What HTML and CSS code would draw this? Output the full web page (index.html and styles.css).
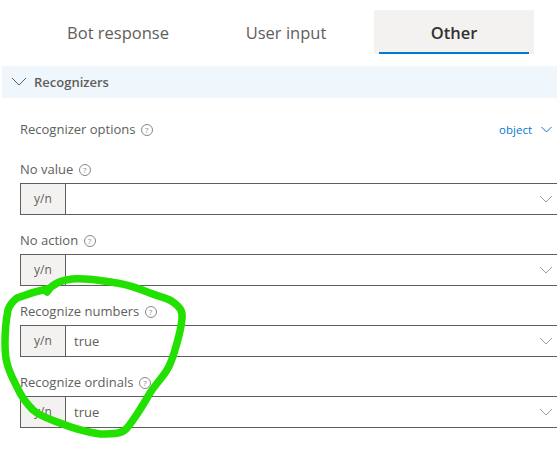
FILE: index.html
```html
<!DOCTYPE html>
<html lang="en">
<head>
    <title>Recognizers</title>
    <link rel="stylesheet" href="styles.css">
</head>
<body>
    <div class="tabs">
        <div class="tab">Bot response</div>
        <div class="tab">User input</div>
        <div class="tab active">Other</div>
    </div>
    <div class="section-head">
        <svg class="chevron-big" width="16" height="10" viewBox="0 0 16 10"><path d="M1 1l7 7 7-7" fill="none" stroke="#605e5c" stroke-width="1"/></svg>
        <span>Recognizers</span>
    </div>
    <div class="options-row">
        <span class="label">Recognizer options <span class="help">?</span></span>
        <span class="type-link">object
            <svg width="11" height="7" viewBox="0 0 11 7"><path d="M.5 1l5 5 5-5" fill="none" stroke="#0078d4" stroke-width="1"/></svg>
        </span>
    </div>
    <div class="field">
        <div class="label">No value <span class="help">?</span></div>
        <div class="input">
            <div class="prefix">y/n</div>
            <div class="value"></div>
            <svg class="arrow" width="14" height="8" viewBox="0 0 14 8"><path d="M1 1l6 6 6-6" fill="none" stroke="#a19f9d" stroke-width="1"/></svg>
        </div>
    </div>
    <div class="field">
        <div class="label">No action <span class="help">?</span></div>
        <div class="input">
            <div class="prefix">y/n</div>
            <div class="value"></div>
            <svg class="arrow" width="14" height="8" viewBox="0 0 14 8"><path d="M1 1l6 6 6-6" fill="none" stroke="#a19f9d" stroke-width="1"/></svg>
        </div>
    </div>
    <div class="field">
        <div class="label">Recognize numbers <span class="help">?</span></div>
        <div class="input">
            <div class="prefix">y/n</div>
            <div class="value">true</div>
            <svg class="arrow" width="14" height="8" viewBox="0 0 14 8"><path d="M1 1l6 6 6-6" fill="none" stroke="#a19f9d" stroke-width="1"/></svg>
        </div>
    </div>
    <div class="field">
        <div class="label">Recognize ordinals <span class="help">?</span></div>
        <div class="input">
            <div class="prefix">y/n</div>
            <div class="value">true</div>
            <svg class="arrow" width="14" height="8" viewBox="0 0 14 8"><path d="M1 1l6 6 6-6" fill="none" stroke="#a19f9d" stroke-width="1"/></svg>
        </div>
    </div>
    <!-- hand drawn circle on top of the form -->
    <svg class="scribble" width="557" height="452" viewBox="0 0 557 452">
        <path d="M47 292 C52 284 62 280 72 279 C88 278 104 281 117 283 C130 285 140 289 150 293 C160 297 168 298 173 302 C180 307 183 311 182 319 C181 328 179 336 177 343 C174 353 172 362 167 370 C162 378 155 385 150 393 C144 403 139 412 133 420 C128 427 125 432 118 433 C112 434 106 434 100 434 C86 432 72 428 60 423 C50 419 41 417 33 410 C26 403 21 396 17 387 C13 379 9 372 7 363 C5 356 5 350 5 343 C5 331 6 320 8 310 C10 304 13 301 17 298 C27 294 37 291 47 289" fill="none" stroke="#22e000" stroke-width="7.5" stroke-linecap="round" stroke-linejoin="round"/>
    </svg>
</body>
</html>
```

FILE: styles.css
```css
body {
    margin: 0;
    width: 557px;
    height: 452px;
    overflow: hidden;
    position: relative;
    background-color: #fff;
    color: #605e5c;
    font-family: "Open Sans", "Liberation Sans", sans-serif;
    font-size: 13px;
}
.tabs {
    display: flex;
    gap: 8px;
    padding: 10px 0 0 38px;
}
.tab {
    width: 160px;
    height: 44px;
    line-height: 46px;
    text-align: center;
    font-size: 16.5px;
    color: #605e5c;
    position: relative;
    box-sizing: border-box;
}
.tab.active {
    background-color: #f3f2f1;
    color: #323130;
    font-weight: 600;
}
.tab.active::after {
    content: "";
    position: absolute;
    left: 5px;
    right: 5px;
    bottom: 0;
    height: 2px;
    background-color: #0078d4;
}
.section-head {
    display: flex;
    align-items: center;
    gap: 7px;
    height: 32px;
    margin: 12px 0 0 2px;
    padding-left: 9px;
    background-color: #eff6fc;
    font-weight: 600;
    color: #605e5c;
}
.options-row {
    display: flex;
    justify-content: space-between;
    align-items: center;
    height: 20px;
    margin-top: 21px;
    padding: 0 5px 0 20px;
}
.type-link {
    color: #0078d4;
    font-size: 11.5px;
    display: flex;
    align-items: center;
    gap: 9px;
}
.help {
    display: inline-block;
    width: 10px;
    height: 10px;
    line-height: 10px;
    margin-left: 2px;
    border: 1px solid #8a8886;
    border-radius: 50%;
    font-size: 8px;
    text-align: center;
    vertical-align: 1px;
    color: #8a8886;
}
.field {
    padding-left: 20px;
    margin-top: 15px;
}
.options-row + .field {
    margin-top: 20px;
}
.field .label {
    height: 20px;
    line-height: 20px;
    margin-bottom: 4px;
}
.input {
    display: flex;
    align-items: center;
    height: 32px;
    width: 560px;
    box-sizing: border-box;
    border: 1px solid #605e5c;
    position: relative;
}
.prefix {
    width: 44px;
    height: 100%;
    line-height: 30px;
    text-align: center;
    font-size: 12px;
    background-color: #f3f2f1;
    border-right: 1px solid #605e5c;
}
.value {
    padding-left: 8px;
    color: #605e5c;
}
.arrow {
    position: absolute;
    left: 518px;
    top: 11px;
}
.scribble {
    position: absolute;
    left: 0;
    top: 0;
    pointer-events: none;
}
```
